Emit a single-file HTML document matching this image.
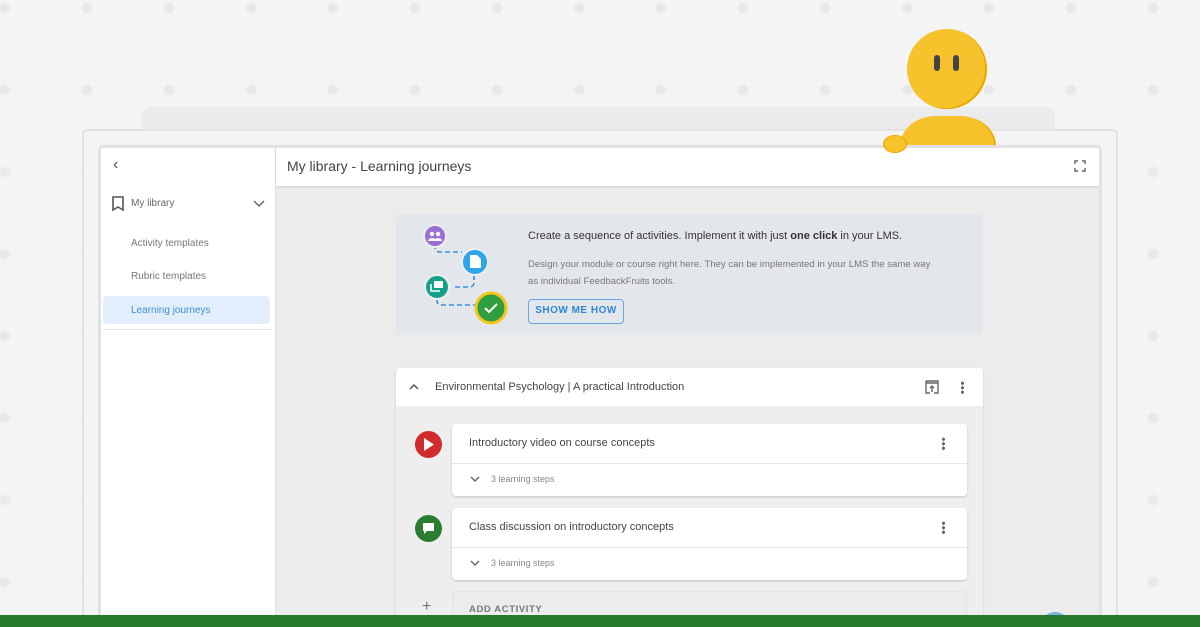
<!DOCTYPE html><html style="width:1200px;height:627px;overflow:hidden"><head><style>
*{box-sizing:border-box;margin:0;padding:0}
body{width:1200px;height:627px;overflow:hidden;position:relative;background:#f4f4f4;font-family:"Liberation Sans",sans-serif;}
.a{position:absolute}
.dots{position:absolute;left:0;top:0;width:1200px;height:627px;background-image:radial-gradient(circle,#e9e9e9 5px,transparent 5.5px);background-size:82px 82px;background-position:-36px -33px}
.card{background:#fff;border-radius:4px;box-shadow:0 1px 2px rgba(0,0,0,.18)}
.kebab{position:absolute;width:3px;height:13px;background:radial-gradient(circle,#666 1.5px,transparent 1.7px) 0 0/3px 4.5px}
</style></head><body>
<div class="dots"></div>
<div class="a" style="left:142px;top:107px;width:913px;height:60px;background:#ebebeb;border-radius:8px"></div>
<div class="a" style="left:82px;top:129px;width:1036px;height:498px;border:2px solid #e2e2e2;border-bottom:none;border-radius:6px 6px 0 0;background:#f4f4f4"></div>
<div class="a" style="left:900px;top:116px;width:96px;height:30px;border-radius:48px 48px 0 0/40px 40px 0 0;background:#f6c32c;border-right:2px solid #eaa800"></div>
<div class="a" style="left:907px;top:29px;width:80px;height:80px;border-radius:50%;background:#f6c32c;box-shadow:inset -2px -1px 0 #eaa800"></div>
<div class="a" style="left:934px;top:55px;width:6px;height:16px;border-radius:3px;background:#444"></div>
<div class="a" style="left:953px;top:55px;width:6px;height:16px;border-radius:3px;background:#444"></div>
<div class="a" style="left:98px;top:145px;width:1004px;height:482px;border:3px solid #e1e1e1;border-bottom:none;border-radius:5px 5px 0 0;background:#ececec;overflow:hidden">
 <div class="a" style="left:0;top:0;width:175px;height:479px;background:#fff;border-right:1px solid #e0e0e0">
  <div class="a" style="left:12px;top:8px;font-size:16px;color:#555">&#8249;</div>
  <svg class="a" style="left:10px;top:48px" width="14" height="16"><path d="M2 1h10v13l-5-3-5 3z" fill="none" stroke="#555" stroke-width="1.6"/></svg>
  <div class="a" style="left:30px;top:50px;font-size:10px;color:#666">My library</div>
  <svg class="a" style="left:152px;top:52px" width="12" height="8"><path d="M1 1l5 5 5-5" fill="none" stroke="#666" stroke-width="1.5"/></svg>
  <div class="a" style="left:30px;top:90px;font-size:10px;color:#777">Activity templates</div>
  <div class="a" style="left:30px;top:123px;font-size:10px;color:#777">Rubric templates</div>
  <div class="a" style="left:2px;top:148px;width:167px;height:28px;background:#e2eefb;border-radius:4px"></div>
  <div class="a" style="left:30px;top:157px;font-size:10px;color:#3d8fdc">Learning journeys</div>
  <div class="a" style="left:2px;top:181px;width:169px;height:1px;background:#e4e4e4"></div>
 </div>
 <div class="a" style="left:175px;top:0;width:825px;height:38px;background:#fff;box-shadow:0 1px 2px rgba(0,0,0,.12)">
  <div class="a" style="left:11px;top:10px;font-size:14px;color:#444">My library - Learning journeys</div>
  <svg class="a" style="left:798px;top:12px" width="12" height="12"><path d="M1 4V1h3M8 1h3v3M11 8v3H8M4 11H1V8" fill="none" stroke="#666" stroke-width="1.4"/></svg>
 </div>
 <div class="a" style="left:295px;top:66px;width:587px;height:121px;background:#e3e7eb;border-radius:3px">
  <svg class="a" style="left:25px;top:8px" width="100" height="110">
   <path d="M14 22v3q0 5 5 5h22 M53 53v7q0 5-5 5h-16 M16 77v1q0 5 5 5h33" fill="none" stroke="#3e8ee0" stroke-width="1.6" stroke-dasharray="5 3"/>
   <circle cx="14" cy="14" r="11" fill="#9a6ed6" stroke="#eee" stroke-width="2"/>
   <circle cx="11" cy="12" r="2.2" fill="#fff"/><circle cx="17" cy="12" r="2.2" fill="#fff"/>
   <path d="M7 19a4 3 0 0 1 8 0zM13 19a4 3 0 0 1 8 0z" fill="#fff"/>
   <circle cx="54" cy="40" r="13" fill="#2fa5ea" stroke="#eee" stroke-width="2"/>
   <path d="M49 33h7l4 4v9h-11z" fill="#fff"/>
   <circle cx="16" cy="65" r="12" fill="#14a08a" stroke="#eee" stroke-width="2"/>
   <rect x="13" y="59" width="9" height="7" fill="#fff"/>
   <path d="M10 62v7h9" fill="none" stroke="#fff" stroke-width="1.5"/>
   <circle cx="70" cy="86" r="15" fill="#2f9e3f" stroke="#f5c518" stroke-width="3"/>
   <path d="M64 86l4 4 8-8" fill="none" stroke="#fff" stroke-width="2"/>
  </svg>
  <div class="a" style="left:132px;top:16px;font-size:11px;color:#333;white-space:nowrap">Create a sequence of activities. Implement it with just <b>one click</b> in your LMS.</div>
  <div class="a" style="left:132px;top:42px;font-size:9.6px;color:#777;line-height:17px;white-space:nowrap">Design your module or course right here. They can be implemented in your LMS the same way<br>as individual FeedbackFruits tools.</div>
  <div class="a" style="left:132px;top:85px;width:96px;height:25px;border:1.5px solid #66a9e8;border-radius:4px;color:#2f86d8;font-size:10px;font-weight:bold;text-align:center;line-height:22px;letter-spacing:.5px">SHOW ME HOW</div>
 </div>
 <div class="a" style="left:295px;top:220px;width:587px;height:259px;background:#eeeeee;border-radius:4px 4px 0 0;box-shadow:0 1px 2px rgba(0,0,0,.15)">
  <div class="a" style="left:0;top:0;width:587px;height:38px;background:#fff;border-radius:4px 4px 0 0">
   <svg class="a" style="left:13px;top:15px" width="10" height="7"><path d="M1 6l4-4 4 4" fill="none" stroke="#555" stroke-width="1.5"/></svg>
   <div class="a" style="left:39px;top:13px;font-size:11px;color:#444">Environmental Psychology | A practical Introduction</div>
   <svg class="a" style="left:529px;top:12px" width="14" height="14"><path d="M1 1h12v12H9M5 13H1V1M1 3h12M7 12V6M5 8l2-2 2 2" fill="none" stroke="#666" stroke-width="1.4"/></svg>
   <div class="kebab" style="left:565px;top:13px"></div>
  </div>
 </div>
 <div class="a" style="left:314px;top:283px;width:27px;height:27px;border-radius:50%;background:#d12c2c"></div>
 <svg class="a" style="left:323px;top:290px" width="10" height="13"><path d="M0 0l10 6.5L0 13z" fill="#fff"/></svg>
 <div class="a card" style="left:351px;top:276px;width:515px;height:72px">
  <div class="a" style="left:17px;top:13px;font-size:11px;color:#444">Introductory video on course concepts</div>
  <div class="kebab" style="left:490px;top:13px"></div>
  <div class="a" style="left:0;top:39px;width:515px;height:1px;background:#e6e6e6"></div>
  <svg class="a" style="left:18px;top:52px" width="10" height="7"><path d="M1 1l4 4 4-4" fill="none" stroke="#666" stroke-width="1.5"/></svg>
  <div class="a" style="left:39px;top:50px;font-size:9px;color:#888">3 learning steps</div>
 </div>
 <div class="a" style="left:314px;top:367px;width:27px;height:27px;border-radius:50%;background:#2b7d32"></div>
 <svg class="a" style="left:321px;top:374px" width="13" height="13"><path d="M1 1h11v8H5l-3 3V9H1z" fill="#fff"/></svg>
 <div class="a card" style="left:351px;top:360px;width:515px;height:72px">
  <div class="a" style="left:17px;top:13px;font-size:11px;color:#444">Class discussion on introductory concepts</div>
  <div class="kebab" style="left:490px;top:13px"></div>
  <div class="a" style="left:0;top:39px;width:515px;height:1px;background:#e6e6e6"></div>
  <svg class="a" style="left:18px;top:52px" width="10" height="7"><path d="M1 1l4 4 4-4" fill="none" stroke="#666" stroke-width="1.5"/></svg>
  <div class="a" style="left:39px;top:50px;font-size:9px;color:#888">3 learning steps</div>
 </div>
 <div class="a" style="left:321px;top:450px;font-size:16px;color:#777;line-height:18px">+</div>
 <div class="a" style="left:351px;top:443px;width:515px;height:36px;border:1px solid #e2e2e2;border-bottom:none;border-radius:4px 4px 0 0;background:#ececec">
  <div class="a" style="left:16px;top:12px;font-size:9.5px;color:#777;font-weight:bold;letter-spacing:.6px">ADD ACTIVITY</div>
 </div>
</div>
<div class="a" style="left:883px;top:135px;width:24px;height:18px;border-radius:50%;background:#f6c32c;border:1px solid #eaa800"></div>
<div class="a" style="left:1040px;top:612px;width:30px;height:15px;border-radius:15px 15px 0 0;background:#7ab3e8"></div>
<div class="a" style="left:0;top:615px;width:1200px;height:12px;background:#267a2a"></div>
</body></html>
